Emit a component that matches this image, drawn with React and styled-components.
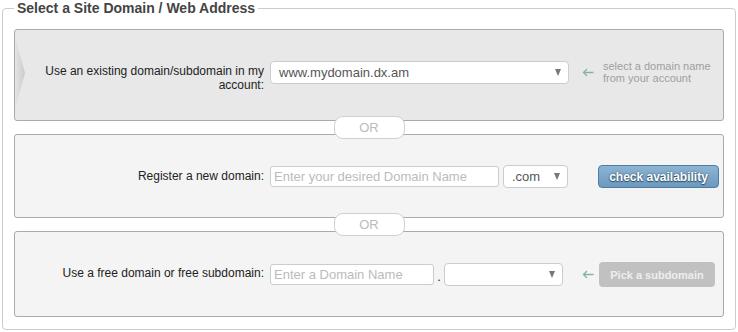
import React from "react";
import styled, { createGlobalStyle } from "styled-components";

const GlobalStyle = createGlobalStyle`
  body {
    margin: 0;
    background: #fff;
    font-family: "Liberation Sans", Arial, sans-serif;
  }
  * { box-sizing: border-box; }
`;

const Fieldset = styled.fieldset`
  margin: 0 0 0 2px;
  width: 734px;
  height: 330px;
  padding: 13px 11px 11px;
  border: 1px solid #ccc;
  border-radius: 4px;
  min-width: 0;
`;

const Legend = styled.legend`
  padding: 0 3px;
  font-size: 14px;
  line-height: 16px;
  font-weight: bold;
  color: #444;
`;

const Panel = styled.div`
  position: relative;
  display: flex;
  align-items: flex-start;
  padding: 30px 0 ${(p) => (p.$active ? 28 : 29)}px;
  background: ${(p) => (p.$active ? "#e8e8e8" : "#f4f4f4")};
  border: 1px solid #aaa;
  border-radius: 3px;
`;

const Notch = styled.svg`
  position: absolute;
  left: 0;
  top: 7px;
`;

const Label = styled.div`
  width: 249px;
  padding-top: 4px;
  margin-right: 6px;
  text-align: right;
  font-size: 12px;
  line-height: 14px;
  color: #222;
`;

const Controls = styled.div`
  display: flex;
  align-items: center;
`;

const Select = styled.div`
  width: ${(p) => p.$w}px;
  height: 23px;
  margin-left: ${(p) => p.$ml || 0}px;
  display: flex;
  align-items: center;
  justify-content: space-between;
  padding: 0 7px 0 8px;
  background: #fff;
  border: 1px solid #ccc;
  border-radius: 4px;
  font-size: 13px;
  color: #555;
`;

const Caret = styled.span`
  width: 0;
  height: 0;
  border-left: 3.5px solid transparent;
  border-right: 3.5px solid transparent;
  border-top: 7px solid #777;
`;

const TextInput = styled.input`
  width: ${(p) => p.$w}px;
  height: 21px;
  padding: 0 3px;
  border: 1px solid #ccc;
  border-radius: 3px;
  background: #fff;
  font-family: "Liberation Sans", Arial, sans-serif;
  font-size: 13px;
  color: #333;
  outline: none;
  &::placeholder {
    color: #bbb;
  }
`;

const Dot = styled.span`
  width: 10px;
  text-align: center;
  font-size: 13px;
  color: #222;
  padding-top: 3px;
`;

const ArrowIcon = styled.svg`
  margin-left: ${(p) => p.$ml}px;
  flex: none;
`;

const Hint = styled.div`
  margin-left: 9px;
  font-size: 11px;
  line-height: 12px;
  color: #9f9f9f;
`;

const BlueButton = styled.button`
  margin-left: 30px;
  width: 121px;
  height: 23px;
  padding: 0;
  border: 1px solid #4f7ea3;
  border-radius: 4px;
  background: linear-gradient(#8db4d3, #6c99bf);
  font-family: "Liberation Sans", Arial, sans-serif;
  font-size: 12px;
  font-weight: bold;
  color: #fff;
  text-shadow: 0 0 2px #2c4a63, 0 1px 1px #2c4a63;
`;

const GrayButton = styled.button`
  margin-left: 5px;
  width: 116px;
  height: 25px;
  padding: 0;
  border: none;
  border-radius: 4px;
  background: #c1c1c1;
  font-family: "Liberation Sans", Arial, sans-serif;
  font-size: 11px;
  font-weight: bold;
  color: #eee;
`;

const Separator = styled.div`
  height: 13px;
  display: flex;
  align-items: center;
  justify-content: center;
`;

const OrPill = styled.div`
  position: relative;
  z-index: 1;
  width: 71px;
  height: 23px;
  flex: none;
  display: flex;
  align-items: center;
  justify-content: center;
  background: #fff;
  border: 1px solid #d0d0d0;
  border-radius: 9px;
  font-size: 13px;
  color: #bbb;
`;

const LeftArrow = ({ ml }) => (
  <ArrowIcon $ml={ml} width="12" height="9" viewBox="0 0 12 9">
    <path d="M11.5 4.5H1.5M5 1L1.5 4.5L5 8" fill="none" stroke="#86b49f" strokeWidth="1.3" />
  </ArrowIcon>
);

const Or = () => (
  <Separator>
    <OrPill>OR</OrPill>
  </Separator>
);

export default function App() {
  return (
    <>
      <GlobalStyle />
      <Fieldset>
        <Legend>Select a Site Domain / Web Address</Legend>

        <Panel $active>
          <Notch width="11" height="74" viewBox="0 0 11 74">
            <defs>
              <linearGradient id="notch" x1="0" x2="1" y1="0" y2="0">
                <stop offset="0" stopColor="#e4e4e4" />
                <stop offset="1" stopColor="#cbcbcb" />
              </linearGradient>
            </defs>
            <polygon points="0,0 10,36 0,72" fill="url(#notch)" />
          </Notch>
          <Label>Use an existing domain/subdomain in my account:</Label>
          <Controls>
            <Select $w={299}>
              www.mydomain.dx.am
              <Caret />
            </Select>
            <LeftArrow ml={13} />
            <Hint>
              select a domain name
              <br />
              from your account
            </Hint>
          </Controls>
        </Panel>

        <Or />

        <Panel>
          <Label>Register a new domain:</Label>
          <Controls>
            <TextInput $w={229} placeholder="Enter your desired Domain Name" />
            <Select $w={65} $ml={4}>
              .com
              <Caret />
            </Select>
            <BlueButton>check availability</BlueButton>
          </Controls>
        </Panel>

        <Or />

        <Panel>
          <Label>Use a free domain or free subdomain:</Label>
          <Controls>
            <TextInput $w={164} placeholder="Enter a Domain Name" />
            <Dot>.</Dot>
            <Select $w={119}>
              <span />
              <Caret />
            </Select>
            <LeftArrow ml={19} />
            <GrayButton>Pick a subdomain</GrayButton>
          </Controls>
        </Panel>
      </Fieldset>
    </>
  );
}
